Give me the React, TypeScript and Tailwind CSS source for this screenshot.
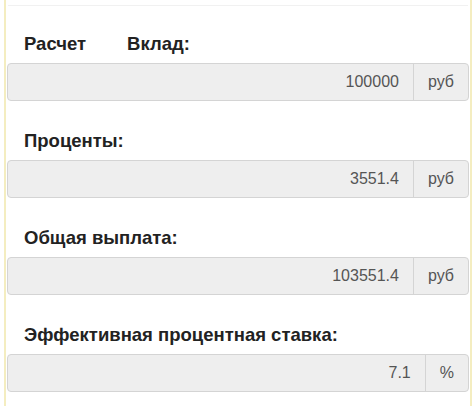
import React from "react";

const rows = [
  { label: "Проценты:", value: "3551.4", unit: "руб" },
  { label: "Общая выплата:", value: "103551.4", unit: "руб" },
  { label: "Эффективная процентная ставка:", value: "7.1", unit: "%" },
];

function Field({ value, unit }: { value: string; unit: string }) {
  return (
    <div className="flex h-[38px] rounded-[4px] border border-[#d4d4d4] bg-[#eeeeee] overflow-hidden">
      <div className="flex-1 flex items-center justify-end pr-[14px] text-[16px] text-[#555555]">
        {value}
      </div>
      <div className="flex items-center px-[14px] border-l border-[#d4d4d4] text-[16px] text-[#555555]">
        {unit}
      </div>
    </div>
  );
}

export default function App() {
  return (
    <div
      className="w-[474px] h-[406px] bg-white overflow-hidden pl-[4px]"
      style={{ fontFamily: '"Liberation Sans", Arial, sans-serif' }}
    >
      <div className="w-[468px] h-full border-x-2 border-[#f4edc0] px-[1px]">
        <div className="h-[5px]" />
        <div className="h-px bg-[#f1f1f1] mx-[1px]" />
        <div className="h-[26px]" />
        <div className="flex h-[24px] leading-[24px] pl-[17px] text-[18.5px] font-bold text-[#222222]">
          <span>Расчет</span>
          <span className="ml-[41px]">Вклад:</span>
        </div>
        <div className="h-[7px]" />
        <Field value="100000" unit="руб" />
        {rows.map((r) => (
          <div key={r.label}>
            <div className="h-[28px]" />
            <div className="h-[24px] leading-[24px] pl-[17px] text-[18.5px] font-bold text-[#222222]">
              {r.label}
            </div>
            <div className="h-[7px]" />
            <Field value={r.value} unit={r.unit} />
          </div>
        ))}
      </div>
    </div>
  );
}
